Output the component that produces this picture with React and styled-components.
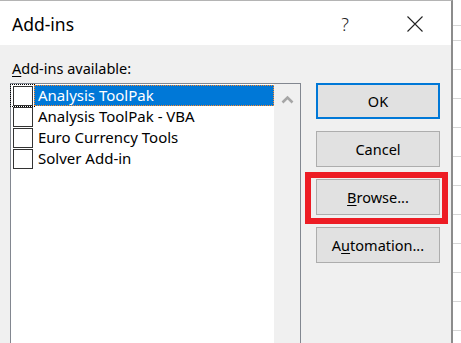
import React from "react";
import styled, { createGlobalStyle, css } from "styled-components";

const Global = createGlobalStyle`
  html, body { margin: 0; padding: 0; background: #ffffff; }
  body { font-family: "Noto Sans", "Segoe UI", "Liberation Sans", sans-serif; color: #000; }
  * { box-sizing: border-box; }
`;

const Page = styled.div`
  display: flex;
  width: 461px;
  height: 343px;
  overflow: hidden;
`;

const Dialog = styled.div`
  width: 453px;
  flex: none;
  display: flex;
  flex-direction: column;
  border-top: 1px solid #b4b4b4;
  border-right: 2px solid #8c8c8c;
  background: #f0f0f0;
`;

const TitleBar = styled.div`
  height: 44px;
  flex: none;
  background: #ffffff;
  display: flex;
  align-items: center;
  justify-content: space-between;
  padding-left: 12px;
  padding-right: 13px;
`;

const Title = styled.div`
  font-size: 17.5px;
  line-height: 24px;
  margin-top: 2px;
`;

const Controls = styled.div`
  display: flex;
  gap: 24px;
  height: 100%;
`;

const Control = styled.div`
  width: 46px;
  display: flex;
  align-items: center;
  justify-content: center;
  font-size: 18px;
  font-weight: 300;
  color: #222;
  padding-top: 2px;
`;

const Body = styled.div`
  flex: 1;
  display: flex;
  padding: 13px 0 0 10px;
  min-height: 0;
`;

const LeftColumn = styled.div`
  width: 291px;
  display: flex;
  flex-direction: column;
`;

const Label = styled.div`
  font-size: 14.5px;
  line-height: 20px;
  padding-left: 2px;
  margin-bottom: 5px;
`;

const Key = styled.span`
  text-decoration: underline;
  text-underline-offset: 2px;
  text-decoration-thickness: 1px;
`;

const ListBox = styled.div`
  flex: 1;
  display: flex;
  border: 1px solid #828790;
  border-bottom: none;
  background: #ffffff;
`;

const Items = styled.div`
  flex: 1;
  display: flex;
  flex-direction: column;
  padding-top: 1px;
`;

const Row = styled.div`
  display: flex;
  height: 21px;
  align-items: stretch;
`;

const CheckCell = styled.div`
  width: 23px;
  display: flex;
  align-items: center;
  justify-content: center;
  flex: none;
  ${(p) =>
    p.$focus &&
    css`
      outline: 1px dotted #000;
      outline-offset: 0px;
    `}
`;

const Box = styled.div`
  width: 20px;
  height: 20px;
  border: 1px solid #333333;
  background: #ffffff;
`;

const ItemText = styled.div`
  flex: 1;
  font-size: 15px;
  line-height: 19px;
  padding-left: 3px;
  white-space: nowrap;
  border: 1px solid transparent;
  ${(p) =>
    p.$selected &&
    css`
      background: #0078d7;
      color: #ffffff;
      border: 1px dotted #ff8a28;
    `}
`;

const Scrollbar = styled.div`
  width: 26px;
  flex: none;
  background: #f0f0f0;
  display: flex;
  flex-direction: column;
  align-items: center;
  padding-top: 11px;
`;

const ButtonColumn = styled.div`
  width: 124px;
  margin-left: 15px;
  padding-top: 25px;
  display: flex;
  flex-direction: column;
  gap: 12px;
`;

const Button = styled.div`
  height: 36px;
  display: flex;
  align-items: center;
  justify-content: center;
  background: #e1e1e1;
  border: ${(p) => (p.$default ? "2px solid #0078d7" : "1px solid #adadad")};
  font-size: 14.5px;
  padding-bottom: 1px;
`;

const Highlight = styled.div`
  position: relative;
`;

const RedBox = styled.div`
  position: absolute;
  top: -7px;
  left: -11px;
  right: -8px;
  bottom: -9px;
  border: 6px solid #ed1c24;
  pointer-events: none;
`;

const Strip = styled.div`
  flex: 1;
  background-color: #ffffff;
  background-image:
    linear-gradient(#d6d6d6, #d6d6d6),
    repeating-linear-gradient(to bottom, transparent 0 28px, #d6d6d6 28px 29px);
  background-size: 100% 1px, 100% 100%;
  background-repeat: no-repeat, repeat;
  background-position: 0 25px, 0 12px;
`;

const addins = [
  "Analysis ToolPak",
  "Analysis ToolPak - VBA",
  "Euro Currency Tools",
  "Solver Add-in",
];

export default function App() {
  return (
    <>
      <Global />
      <Page>
        <Dialog>
          <TitleBar>
            <Title>Add-ins</Title>
            <Controls>
              <Control>?</Control>
              <Control>
                <svg width="16" height="16" viewBox="0 0 16 16">
                  <path d="M0.5 0.5 L15.5 15.5 M15.5 0.5 L0.5 15.5" stroke="#222" strokeWidth="1.1" fill="none" />
                </svg>
              </Control>
            </Controls>
          </TitleBar>
          <Body>
            <LeftColumn>
              <Label>
                <Key>A</Key>dd-ins available:
              </Label>
              <ListBox>
                <Items>
                  {addins.map((name, i) => (
                    <Row key={name}>
                      <CheckCell $focus={i === 0}>
                        <Box />
                      </CheckCell>
                      <ItemText $selected={i === 0}>{name}</ItemText>
                    </Row>
                  ))}
                </Items>
                <Scrollbar>
                  <svg width="13" height="9" viewBox="0 0 13 9">
                    <polyline points="1.5,7.5 6.5,2.5 11.5,7.5" stroke="#a6a6a6" strokeWidth="2.6" fill="none" />
                  </svg>
                </Scrollbar>
              </ListBox>
            </LeftColumn>
            <ButtonColumn>
              <Button $default>OK</Button>
              <Button>Cancel</Button>
              <Highlight>
                <Button>
                  <span>
                    <Key>B</Key>rowse...
                  </span>
                </Button>
                <RedBox />
              </Highlight>
              <Button>
                <span>
                  A<Key>u</Key>tomation...
                </span>
              </Button>
            </ButtonColumn>
          </Body>
        </Dialog>
        <Strip />
      </Page>
    </>
  );
}
